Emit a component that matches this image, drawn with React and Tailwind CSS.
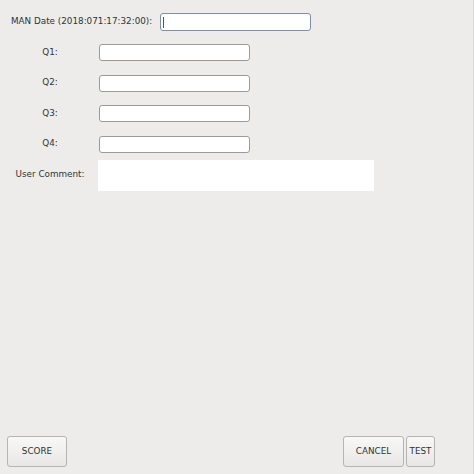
export default function App() {
  const font = { fontFamily: '"DejaVu Sans", sans-serif' };
  const qs = ["Q1:", "Q2:", "Q3:", "Q4:"];
  const btn =
    "h-[31px] rounded-[3px] border border-[#b5b4b1] bg-gradient-to-b from-[#f8f8f7] to-[#e8e7e5] text-[8.8px] text-[#2e3436]";

  return (
    <div
      className="w-[474px] h-[474px] bg-[#edeceb] text-[#2e3436] text-[8.8px] flex flex-col overflow-hidden border-r border-[#d8d7d5]"
      style={font}
    >
      {/* Date row */}
      <div className="flex items-center h-[18px] mt-[13px]">
        <span className="w-[160px] pl-[11px]">MAN Date (2018:071:17:32:00):</span>
        <div className="w-[151px] h-[18px] bg-white border border-[#7e8fa6] rounded-[3px] flex items-center pl-[2px]">
          <div className="w-px h-[11px] bg-[#555]" />
        </div>
      </div>

      {/* Q rows */}
      <div className="flex flex-col gap-[13.5px] mt-[13px]">
        {qs.map((q) => (
          <div key={q} className="flex items-center h-[17px]">
            <span className="w-[100px] text-center">{q}</span>
            <div className="-ml-px w-[151px] h-[17px] bg-white border border-[#9a9a98] rounded-[3px]" />
          </div>
        ))}
      </div>

      {/* Comment */}
      <div className="flex items-center mt-[7px]">
        <span className="w-[100px] text-center">User Comment:</span>
        <div className="-ml-[2px] w-[276px] h-[31px] bg-white" />
      </div>

      {/* Buttons */}
      <div className="mt-auto mb-[7px] flex items-center px-[7px]">
        <button className={`${btn} w-[60px]`}>SCORE</button>
        <div className="ml-auto flex gap-[2px] mr-[31px]">
          <button className={`${btn} w-[61px]`}>CANCEL</button>
          <button className={`${btn} w-[29px]`}>TEST</button>
        </div>
      </div>
    </div>
  );
}
